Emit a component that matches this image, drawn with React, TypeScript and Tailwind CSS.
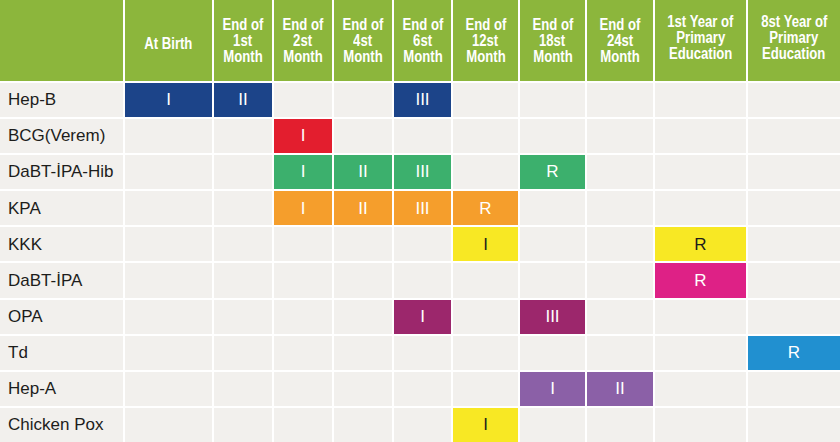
const columns = [
  ['At Birth'],
  ['End of', '1st', 'Month'],
  ['End of', '2st', 'Month'],
  ['End of', '4st', 'Month'],
  ['End of', '6st', 'Month'],
  ['End of', '12st', 'Month'],
  ['End of', '18st', 'Month'],
  ['End of', '24st', 'Month'],
  ['1st Year of', 'Primary', 'Education'],
  ['8st Year of', 'Primary', 'Education'],
];

type Dose = { col: number; label: string; color: string; dark?: boolean };

const rows: { name: string; doses: Dose[] }[] = [
  {
    name: 'Hep-B',
    doses: [
      { col: 0, label: 'I', color: 'bg-[#1c4489]' },
      { col: 1, label: 'II', color: 'bg-[#1c4489]' },
      { col: 4, label: 'III', color: 'bg-[#1c4489]' },
    ],
  },
  { name: 'BCG(Verem)', doses: [{ col: 2, label: 'I', color: 'bg-[#e31e2e]' }] },
  {
    name: 'DaBT-İPA-Hib',
    doses: [
      { col: 2, label: 'I', color: 'bg-[#3cb06d]' },
      { col: 3, label: 'II', color: 'bg-[#3cb06d]' },
      { col: 4, label: 'III', color: 'bg-[#3cb06d]' },
      { col: 6, label: 'R', color: 'bg-[#3cb06d]' },
    ],
  },
  {
    name: 'KPA',
    doses: [
      { col: 2, label: 'I', color: 'bg-[#f59e2c]' },
      { col: 3, label: 'II', color: 'bg-[#f59e2c]' },
      { col: 4, label: 'III', color: 'bg-[#f59e2c]' },
      { col: 5, label: 'R', color: 'bg-[#f59e2c]' },
    ],
  },
  {
    name: 'KKK',
    doses: [
      { col: 5, label: 'I', color: 'bg-[#f8e824]', dark: true },
      { col: 8, label: 'R', color: 'bg-[#f8e824]', dark: true },
    ],
  },
  { name: 'DaBT-İPA', doses: [{ col: 8, label: 'R', color: 'bg-[#de2186]' }] },
  {
    name: 'OPA',
    doses: [
      { col: 4, label: 'I', color: 'bg-[#9c276c]' },
      { col: 6, label: 'III', color: 'bg-[#9c276c]' },
    ],
  },
  { name: 'Td', doses: [{ col: 9, label: 'R', color: 'bg-[#2190d0]' }] },
  {
    name: 'Hep-A',
    doses: [
      { col: 6, label: 'I', color: 'bg-[#8b60a7]' },
      { col: 7, label: 'II', color: 'bg-[#8b60a7]' },
    ],
  },
  { name: 'Chicken Pox', doses: [{ col: 5, label: 'I', color: 'bg-[#f8e824]', dark: true }] },
];

export default function App() {
  return (
    <div
      className="grid h-[442px] w-[840px] gap-[2px] bg-white grid-cols-[123px_87px_58px_58px_58px_57px_65px_65px_66px_91px_1fr] grid-rows-[81px_repeat(10,1fr)]"
      style={{ fontFamily: '"Liberation Sans", Arial, sans-serif' }}
    >
      {/* Cabecera */}
      <div className="bg-[#8cb63c]"></div>
      {columns.map((lines, i) => (
        <div
          key={i}
          className={`flex flex-col items-center justify-center bg-[#8cb63c] text-center text-[16px] font-bold leading-[16px] text-white ${
            lines.length === 1 ? 'pt-[6px]' : i >= 8 ? 'pb-[6px]' : 'pt-[1px]'
          }`}
        >
          {lines.map((l) => (
            <span key={l} className="inline-block scale-x-[0.82] whitespace-nowrap">
              {l}
            </span>
          ))}
        </div>
      ))}

      {/* Filas */}
      {rows.map((row) => (
        <Row key={row.name} name={row.name} doses={row.doses} />
      ))}
    </div>
  );
}

function Row({ name, doses }: { name: string; doses: Dose[] }) {
  return (
    <>
      <div className="flex items-center bg-[#f2f0ed] pl-[8px] text-[17px] text-[#1d1d1b]">{name}</div>
      {columns.map((_, i) => {
        const dose = doses.find((d) => d.col === i);
        if (!dose) return <div key={i} className="bg-[#f2f0ed]"></div>;
        return (
          <div
            key={i}
            className={`flex items-center justify-center text-[17px] ${dose.color} ${
              dose.dark ? 'text-[#1d1d1b]' : 'text-white'
            }`}
          >
            {dose.label}
          </div>
        );
      })}
    </>
  );
}
